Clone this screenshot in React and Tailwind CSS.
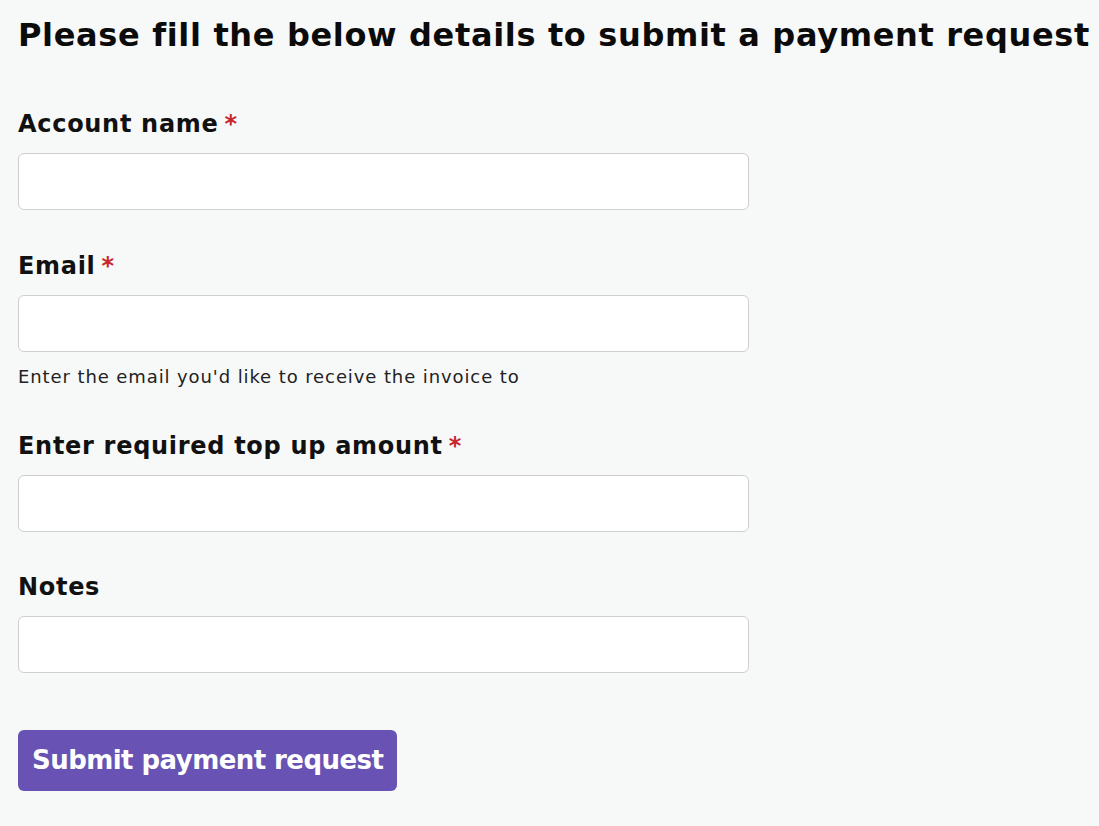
import React from "react";

const font = { fontFamily: '"DejaVu Sans", "Open Sans", sans-serif' };

function Label({ children, required }) {
  return (
    <div className="text-[24px] leading-[30px] font-bold text-[#111] tracking-[0.7px]">
      {children}
      {required && <span className="text-[#c8282d] ml-[6px]">*</span>}
    </div>
  );
}

function Input() {
  return (
    <input
      type="text"
      className="mt-[14px] block w-[731px] h-[57px] bg-white border border-[#cfcfcf] rounded-[6px] outline-none"
    />
  );
}

export default function App() {
  return (
    <div className="min-h-[826px] w-full bg-[#f7f8f8] pl-[18px] pt-[15px]" style={font}>
      <h1 className="text-[32px] leading-[40px] font-bold text-[#0b0b0b] whitespace-nowrap tracking-[0.65px]">
        Please fill the below details to submit a payment request
      </h1>
      <div className="mt-[54px]">
        <Label required>Account name</Label>
        <Input />
      </div>
      <div className="mt-[41px]">
        <Label required>Email</Label>
        <Input />
        <div className="mt-[13px] text-[18px] leading-[24px] text-[#222] tracking-[0.9px]">
          Enter the email you'd like to receive the invoice to
        </div>
      </div>
      <div className="mt-[42px]">
        <Label required>Enter required top up amount</Label>
        <Input />
      </div>
      <div className="mt-[40px]">
        <Label>Notes</Label>
        <Input />
      </div>
      <button className="mt-[57px] h-[61px] px-[14px] bg-[#6853b5] rounded-[6px] text-white text-[26px] font-bold tracking-[-0.55px]">
        Submit payment request
      </button>
    </div>
  );
}
